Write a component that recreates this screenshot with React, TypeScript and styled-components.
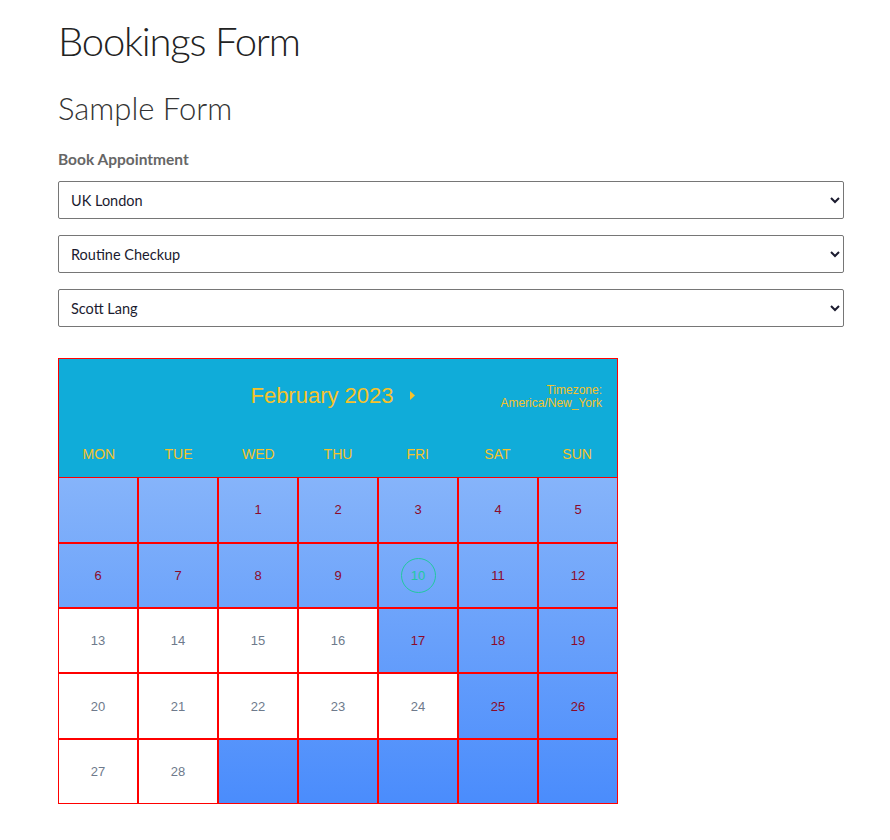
import React from "react"
import styled, { createGlobalStyle } from "styled-components"

const GlobalStyle = createGlobalStyle`
  body {
    margin: 0;
    background: #fff;
    font-family: Lato, "Open Sans", sans-serif;
  }
`

const Page = styled.div`
  padding: 17px 46px 30px 58px;
`

const Title = styled.h1`
  font-family: Lato, sans-serif;
  font-weight: 300;
  font-size: 40px;
  line-height: 1.2;
  color: #222;
  margin: 0 0 25px;
  letter-spacing: -1.2px;
`

const SubTitle = styled.h2`
  font-family: Lato, sans-serif;
  font-weight: 300;
  font-size: 31px;
  line-height: 1.2;
  color: #333;
  margin: 0 0 23px;
`

const Label = styled.label`
  display: block;
  font-weight: 700;
  font-size: 15.5px;
  color: #666;
  margin-bottom: 13px;
`

const Select = styled.select`
  display: block;
  width: 100%;
  height: 38px;
  border: 1px solid #767676;
  border-radius: 2px;
  background: #fff;
  padding: 0 8px;
  font-family: Lato, sans-serif;
  font-size: 14.5px;
  color: #1b1b2f;
  margin-bottom: 16px;
`

const Calendar = styled.div`
  width: 560px;
  margin-top: 31px;
  font-family: "Liberation Sans", Arial, sans-serif;
`

const Header = styled.div`
  background: #10acd9;
  border: 1px solid #f00;
  border-bottom: none;
  color: #f6c22a;
`

const TopRow = styled.div`
  display: grid;
  grid-template-columns: 1fr auto 1fr;
  align-items: center;
  height: 72px;
  padding: 0 15px;
`

const Month = styled.div`
  display: flex;
  align-items: center;
  gap: 16px;
  font-size: 22px;
  padding-top: 1px;
  padding-right: 10px;
`

const Timezone = styled.div`
  justify-self: end;
  text-align: right;
  font-size: 12px;
  line-height: 13px;
  padding-top: 3px;
`

const Weekdays = styled.div`
  display: grid;
  grid-template-columns: repeat(7, 1fr);
  height: 45px;
  align-items: center;
  padding-bottom: 1px;
`

const Weekday = styled.div`
  text-align: center;
  font-size: 14px;
`

const Grid = styled.div`
  display: grid;
  grid-template-columns: repeat(7, 80px);
  grid-auto-rows: 65.4px;
  background: linear-gradient(#86b4fa, #4a8cfc);
`

const Cell = styled.div<{ $closed?: boolean }>`
  border: 1px solid #f00;
  display: flex;
  align-items: center;
  justify-content: center;
  font-size: 13px;
  background: ${(p) => (p.$closed ? "#fff" : "transparent")};
  color: ${(p) => (p.$closed ? "#6e7a8c" : "#8b0a2a")};
`

const Today = styled.span`
  width: 33px;
  height: 33px;
  border-radius: 50%;
  border: 1px solid #22c8a0;
  color: #22c8a0;
  display: flex;
  align-items: center;
  justify-content: center;
`

const closedDays = [13, 14, 15, 16, 20, 21, 22, 23, 24, 27, 28]
const days: (number | null)[] = [
  null, null,
  ...Array.from({ length: 28 }, (_, i) => i + 1),
  null, null, null, null, null,
]

export default function App() {
  return (
    <Page>
      <GlobalStyle />
      <Title>Bookings Form</Title>
      <SubTitle>Sample Form</SubTitle>
      <Label>Book Appointment</Label>
      <Select defaultValue="london">
        <option value="london">UK London</option>
      </Select>
      <Select defaultValue="routine">
        <option value="routine">Routine Checkup</option>
      </Select>
      <Select defaultValue="scott">
        <option value="scott">Scott Lang</option>
      </Select>

      <Calendar>
        <Header>
          <TopRow>
            <span />
            <Month>
              February 2023
              <svg width="6" height="9" viewBox="0 0 6 9">
                <path d="M0 0 L5 4.5 L0 9 Z" fill="#f6c22a" />
              </svg>
            </Month>
            <Timezone>
              Timezone:
              <br />
              America/New_York
            </Timezone>
          </TopRow>
          <Weekdays>
            {["MON", "TUE", "WED", "THU", "FRI", "SAT", "SUN"].map((d) => (
              <Weekday key={d}>{d}</Weekday>
            ))}
          </Weekdays>
        </Header>
        <Grid>
          {days.map((d, i) => (
            <Cell key={i} $closed={d !== null && closedDays.includes(d)}>
              {d === 10 ? <Today>10</Today> : d}
            </Cell>
          ))}
        </Grid>
      </Calendar>
    </Page>
  )
}
